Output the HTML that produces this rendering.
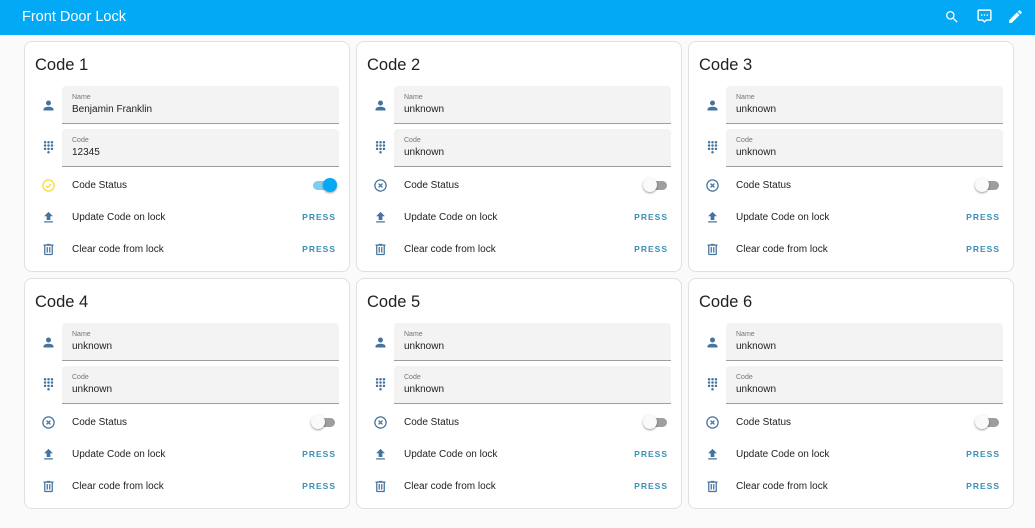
<!DOCTYPE html><html><head><style>
*{box-sizing:border-box;margin:0;padding:0}
body{width:1035px;height:528px;background:#fafafa;font-family:"Liberation Sans",sans-serif;position:relative;overflow:hidden;color:#212121}
.hdr{position:absolute;left:0;top:0;width:1035px;height:35px;background:#03a9f4;color:#fff}
.hdr .t{position:absolute;left:22px;top:9px;font-size:14.5px}
.card{position:absolute;width:326px;height:231px;background:#fff;border:1px solid #e0e0e0;border-radius:8px}
.ttl{position:absolute;left:10px;top:14px;font-size:16.5px;color:#212121}
.fld{position:absolute;left:37px;width:277px;height:38px;background:#f3f3f3;border-bottom:1px solid #9e9e9e;border-radius:4px 4px 0 0}
.fld .l{position:absolute;left:10px;top:8px;font-size:7px;color:#757575}
.fld .v{position:absolute;left:10px;top:18px;font-size:10px;color:#212121}
.ic{position:absolute;left:16px;width:15px;height:15px}
.row{position:absolute;left:47px;font-size:10px;color:#212121}
.press{position:absolute;right:13px;font-size:8.5px;font-weight:bold;letter-spacing:1px;color:#3a8fb7}
.sw{position:absolute;right:14px;width:22px;height:9px;border-radius:5px;background:#9e9e9e}
.sw i{position:absolute;left:-2px;top:-3px;width:14px;height:14px;border-radius:50%;background:#fafafa;box-shadow:0 1px 2px rgba(0,0,0,.4)}
.sw.on{background:#7dcdf5}.sw.on i{left:10px;background:#03a9f4}
</style></head><body>
<div class="hdr"><div class="t">Front Door Lock</div>
<svg style="position:absolute;left:944px;top:9px" width="16" height="16" viewBox="0 0 24 24"><path fill="#fff" d="M15.5 14h-.79l-.28-.27A6.47 6.47 0 0 0 16 9.5 6.5 6.5 0 1 0 9.5 16c1.610 0 3.090-.59 4.230-1.570l.27.28v.79l5 4.99L20.49 19l-4.99-5zm-6 0C7.01 14 5 11.99 5 9.5S7.01 5 9.5 5 14 7.01 14 9.5 11.99 14 9.5 14z"/></svg>
<svg style="position:absolute;left:976px;top:8px" width="17" height="17" viewBox="0 0 24 24"><path fill="#fff" d="M20 2H4c-1.1 0-2 .9-2 2v12c0 1.1.9 2 2 2h5l3 3 3-3h5c1.1 0 2-.9 2-2V4c0-1.1-.9-2-2-2zm0 14h-5.8L12 18.2 9.8 16H4V4h16v12zM7 9h2v2H7zm4 0h2v2h-2zm4 0h2v2h-2z"/></svg>
<svg style="position:absolute;left:1007px;top:8px" width="17" height="17" viewBox="0 0 24 24"><path fill="#fff" d="M3 17.25V21h3.75L17.81 9.94l-3.75-3.75L3 17.25zM20.71 7.04a1 1 0 0 0 0-1.41l-2.340-2.340a1 1 0 0 0-1.410 0l-1.830 1.830 3.750 3.750 1.830-1.830z"/></svg>
</div>
<div id="c"></div>
<script>
var pos=[[24,41],[356,41],[688,41],[24,278],[356,278],[688,278]];var h="";
var person='<path fill="#44739e" d="M12 4a4 4 0 1 1 0 8 4 4 0 0 1 0-8zm0 10c4.4 0 8 1.8 8 4v2H4v-2c0-2.2 3.6-4 8-4z"/>';
var dial='<g fill="#44739e"><circle cx="6.5" cy="3.5" r="2"/><circle cx="12" cy="3.5" r="2"/><circle cx="17.5" cy="3.5" r="2"/><circle cx="6.5" cy="8.8" r="2"/><circle cx="12" cy="8.8" r="2"/><circle cx="17.5" cy="8.8" r="2"/><circle cx="6.5" cy="14.1" r="2"/><circle cx="12" cy="14.1" r="2"/><circle cx="17.5" cy="14.1" r="2"/><circle cx="12" cy="19.5" r="2"/></g>';
var chk='<circle cx="12" cy="12" r="9" fill="none" stroke="#fdd835" stroke-width="2"/><path d="M8 12.3l2.8 2.8 5.4-5.4" fill="none" stroke="#fdd835" stroke-width="2"/>';
var x='<circle cx="12" cy="12" r="9" fill="none" stroke="#44739e" stroke-width="2"/><path d="M9 9l6 6M15 9l-6 6" stroke="#44739e" stroke-width="2"/>';
var up='<path fill="#44739e" d="M9 16h6v-6h4l-7-7-7 7h4zm-4 2h14v2H5z"/>';
var tr='<path fill="#44739e" d="M9 3v1H4v2h1v13a2 2 0 0 0 2 2h10a2 2 0 0 0 2-2V6h1V4h-5V3H9zM7 6h10v13H7V6zm2 2v9h2V8H9zm4 0v9h2V8h-2z"/>';
function ic(t,p){return '<svg class="ic" style="top:'+t+'px" viewBox="0 0 24 24">'+p+'</svg>';}
for(var i=0;i<6;i++){var p=pos[i],on=i==0;
h+='<div class="card" style="left:'+p[0]+'px;top:'+p[1]+'px">'+
'<div class="ttl">Code '+(i+1)+'</div>'+
ic(56,person)+'<div class="fld" style="top:44px"><div class="l">Name</div><div class="v">'+(on?'Benjamin Franklin':'unknown')+'</div></div>'+
ic(98,dial)+'<div class="fld" style="top:87px"><div class="l">Code</div><div class="v">'+(on?'12345':'unknown')+'</div></div>'+
ic(136,on?chk:x)+'<div class="row" style="top:138px">Code Status</div><div class="sw'+(on?' on':'')+'" style="top:139px"><i></i></div>'+
ic(168,up)+'<div class="row" style="top:170px">Update Code on lock</div><div class="press" style="top:170px">PRESS</div>'+
ic(200,tr)+'<div class="row" style="top:202px">Clear code from lock</div><div class="press" style="top:202px">PRESS</div>'+
'</div>';}
document.getElementById("c").innerHTML=h;
</script></body></html>
